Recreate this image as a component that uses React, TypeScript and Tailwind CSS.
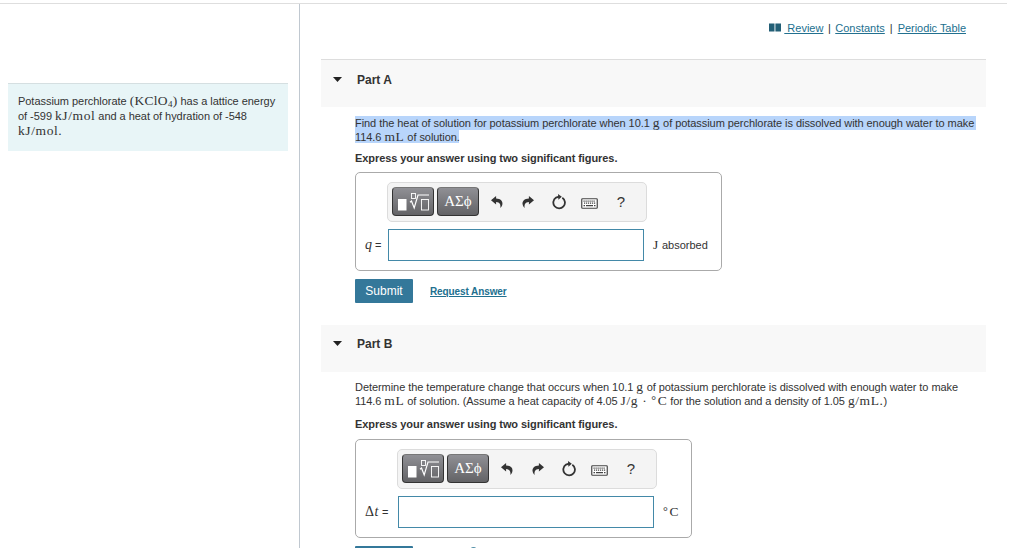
import type { ReactNode } from 'react';

function M({ children }: { children: ReactNode }) {
  return <span className="font-['Liberation_Serif',serif] text-[13.5px] leading-none tracking-[0.6px]">{children}</span>;
}

function Degree() {
  return <span className="relative -top-px mr-px text-[12px]">°</span>;
}

function UndoIcon({ flip }: { flip?: boolean }) {
  return (
    <svg width="12" height="12" viewBox="0 0 12 12" className={flip ? '-scale-x-100' : ''}>
      <path d="M0 4.2 L5.1 0 V2.4 C9.6 2.5 12 5.2 11.4 8.2 C11.1 9.8 10.3 11.1 9.3 12 C9.9 8.5 8.7 6.3 5.1 6.1 V8.4 Z" fill="#333" />
    </svg>
  );
}

function ResetIcon() {
  return (
    <svg width="14" height="16" viewBox="0 0 14 16">
      <path d="M10.3 3.7 A5.8 5.8 0 1 1 4.1 3.6 L7 2.7" fill="none" stroke="#333" strokeWidth="1.8" />
      <path d="M6 0 L9.8 2.8 L6.4 5.8 Z" fill="#333" />
    </svg>
  );
}

function KeyboardIcon() {
  return (
    <svg width="17" height="11" viewBox="0 0 17 11">
      <rect x="0.75" y="0.75" width="15.5" height="9.5" rx="0.8" fill="#fff" stroke="#444" strokeWidth="1.2" />
      <path d="M2.5 3.2 H14.5 M3 5.2 H14.5" stroke="#444" strokeWidth="1.2" strokeDasharray="1.2 0.8" />
      <path d="M2.5 7.7 H4 M5 7.7 H12 M13 7.7 H14.5" stroke="#444" strokeWidth="1.2" />
    </svg>
  );
}

function Toolbar() {
  const button =
    'flex h-[29px] w-[42px] shrink-0 items-center justify-center rounded-[4px] border border-[#333] border-t-[#777] bg-gradient-to-b from-[#909095] to-[#636366]';
  return (
    <div className="-ml-px flex h-[40px] w-[260px] items-center rounded-[5px] border border-[#dcdcdc] bg-[#f4f4f4] pb-px pl-[4px]">
      <div className={button}>
        <svg width="34" height="20" viewBox="0 0 34 20" fill="none" stroke="#fff">
          <rect x="2" y="7" width="8.5" height="11.5" fill="#fff" stroke="none" />
          <rect x="15.5" y="1.5" width="4" height="5" strokeWidth="0.9" />
          <path d="M14 10.2 L15.5 9 L18.2 16 L22 3 H33" strokeWidth="1.2" />
          <rect x="25.5" y="7.5" width="7" height="10.5" strokeWidth="0.9" />
        </svg>
      </div>
      <div className={`${button} ml-[3px] font-['Liberation_Serif',serif] text-[15px] text-white`}>ΑΣϕ</div>
      <div className="ml-[12px] flex w-[12px] justify-center"><UndoIcon /></div>
      <div className="ml-[19px] flex w-[12px] justify-center"><UndoIcon flip /></div>
      <div className="ml-[18px] flex w-[14px] justify-center"><ResetIcon /></div>
      <div className="ml-[15px] flex w-[17px] justify-center pt-[3px]"><KeyboardIcon /></div>
      <div className="ml-[17px] w-[12px] text-center text-[15px] leading-none">?</div>
    </div>
  );
}

function AnswerBox({ label, unit, className, labelClass }: { label: ReactNode; unit: ReactNode; className: string; labelClass: string }) {
  return (
    <div className={`flex h-[99px] rounded-[5px] border border-[#aaa] bg-white ${className}`}>
      <div className={`shrink-0 pt-[61px] pl-[9px] text-[11px] whitespace-nowrap ${labelClass}`}>{label}</div>
      <div className="pt-[9px]">
        <Toolbar />
        <div className="mt-[7px] flex items-center">
          <div className="h-[32px] w-[256px] shrink-0 border border-[#4389a8] bg-white" />
          <div className="ml-[9px] text-[11px] whitespace-nowrap">{unit}</div>
        </div>
      </div>
    </div>
  );
}

function PartHeader({ title, className }: { title: string; className: string }) {
  return (
    <div className={`flex w-[665px] items-start bg-[#f8f8f8] ${className}`}>
      <svg width="9" height="5" viewBox="0 0 9 5" className="mt-[5px] ml-[12px]">
        <path d="M0 0 H9 L4.5 5 Z" fill="#222" />
      </svg>
      <h2 className="ml-[15px] text-[12px] leading-[16px] font-bold">{title}</h2>
    </div>
  );
}

export default function App() {
  return (
    <div className="flex h-[548px] w-[1024px] flex-col overflow-hidden bg-white pt-[3px] font-['Liberation_Sans',Arial,sans-serif] text-[11px] text-[#333]">
      <div className="h-px w-[1007px] shrink-0 bg-[#dedede]" />
      <div className="flex min-h-0 flex-1">
        {/* Problem introduction */}
        <aside className="w-[300px] shrink-0 border-r border-[#c0c8d0] pt-[79px] pl-[8px]">
          <div className="h-[68px] w-[280px] border-t border-[#d5dfe1] bg-[#e8f5f7] pt-[10px] pl-[10px] leading-[15px] whitespace-nowrap">
            <p className="h-[15px] tracking-[-0.04px]">
              Potassium perchlorate <span className="font-['Liberation_Serif',serif] text-[13.5px] leading-none tracking-[0.3px]">(KClO<sub className="text-[9px]">4</sub>)</span> has a lattice energy
            </p>
            <p className="h-[15px] tracking-[-0.04px]">of -599 <M>kJ/mol</M> and a heat of hydration of -548</p>
            <p className="h-[15px]"><M>kJ/mol.</M></p>
          </div>
        </aside>

        <main className="w-[724px] pl-[21px]">
          <nav className="flex h-[55px] w-[645px] items-start justify-end pt-[17px] text-[11px] leading-[14px] text-[#22708f]">
            <svg width="12" height="9" viewBox="0 0 12 9" className="mt-[2px] mr-[3px]">
              <path d="M0 0.5 H5.5 V8.5 H0 Z M6.4 0.5 H12 V8.5 H6.4 Z" fill="#235f76" />
            </svg>
            <a className="whitespace-pre underline"> Review</a>
            <span className="mx-[4.5px] text-[#333]">|</span>
            <a className="underline">Constants</a>
            <span className="mx-[5px] text-[#333]">|</span>
            <a className="tracking-[-0.04px] underline">Periodic Table</a>
          </nav>

          {/* Part A */}
          <PartHeader title="Part A" className="h-[48px] border-t border-[#ddd] pt-[12px]" />
          <section className="h-[218px] pt-[9px] pl-[34px] whitespace-nowrap">
            <div className="h-[14px] w-[621px] bg-[#b8d5fb] leading-[14px] tracking-[-0.06px]">
              Find the heat of solution for potassium perchlorate when 10.1 <M>g</M> of potassium perchlorate is dissolved with enough water to make
            </div>
            <div className="h-[13px] w-[104px] bg-[#b8d5fb] leading-[12px] tracking-[-0.06px]">114.6 <M>mL</M> of solution.</div>
            <p className="mt-[8px] text-[11px] leading-[14px] font-bold tracking-[-0.07px]">Express your answer using two significant figures.</p>
            <AnswerBox
              className="mt-[7px] w-[367px]"
              labelClass="w-[32px]"
              label={<><i className="font-['Liberation_Serif',serif] text-[14px]">q</i> =</>}
              unit={<><M>J</M> absorbed</>}
            />
            <div className="mt-[8px] flex items-center">
              <button className="h-[24px] w-[58px] rounded-[1px] bg-[#34789a] text-[12px] text-white">Submit</button>
              <a className="ml-[17px] text-[10px] font-bold tracking-[-0.1px] text-[#22708f] underline">Request Answer</a>
            </div>
          </section>

          {/* Part B */}
          <PartHeader title="Part B" className="h-[47px] pt-[11px]" />
          <section className="pt-[8px] pl-[34px] whitespace-nowrap">
            <p className="h-[14px] leading-[14px] tracking-[-0.055px]">
              Determine the temperature change that occurs when 10.1 <M>g</M> of potassium perchlorate is dissolved with enough water to make
            </p>
            <p className="h-[14px] leading-[14px] tracking-[-0.07px]">
              114.6 <M>mL</M> of solution. (Assume a heat capacity of 4.05 <M>J/g · <Degree />C</M> for the solution and a density of 1.05 <M>g/mL.</M>)
            </p>
            <p className="mt-[9px] text-[11px] leading-[14px] font-bold tracking-[-0.07px]">Express your answer using two significant figures.</p>
            <AnswerBox
              className="mt-[8px] w-[337px]"
              labelClass="w-[42px]"
              label={<><span className="font-['Liberation_Serif',serif] text-[14px] tracking-[0.5px]">Δ<i>t</i></span> =</>}
              unit={<M><Degree />C</M>}
            />
            <div className="mt-[8px] flex items-start">
              <button aria-label="Submit" className="h-[24px] w-[58px] rounded-[1px] bg-[#34789a]" />
              <div className="mt-px ml-[56px] h-[10px] w-[9px] rounded-full border border-[#22708f]" />
            </div>
          </section>
        </main>
      </div>
    </div>
  );
}
